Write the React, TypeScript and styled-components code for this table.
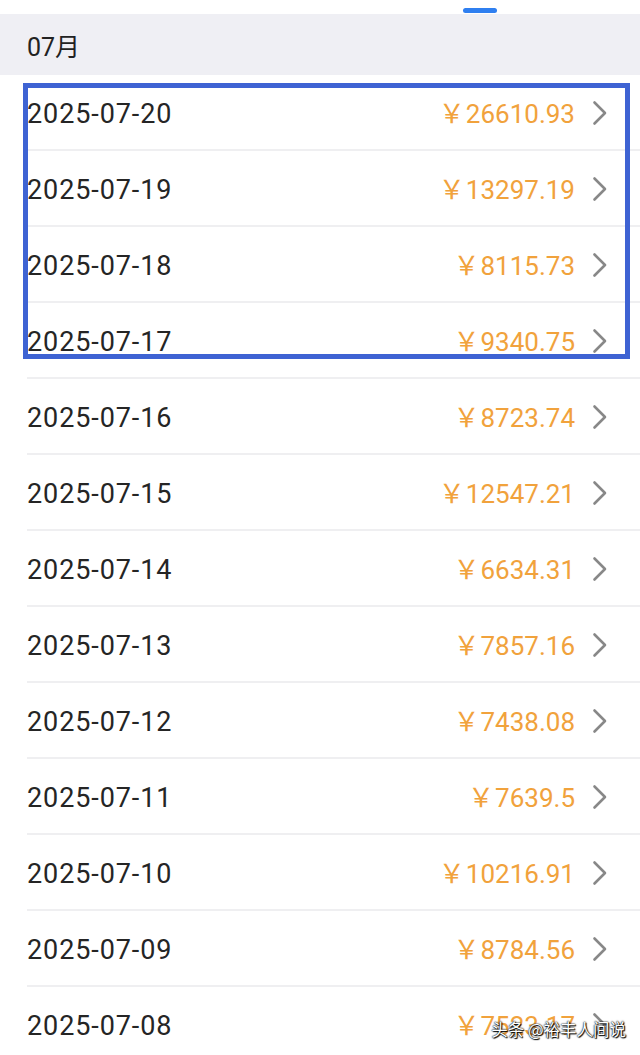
import React from "react";
import styled, { createGlobalStyle } from "styled-components";

const GlobalStyle = createGlobalStyle`
  html, body {
    margin: 0;
    padding: 0;
    background: #ffffff;
  }
  body {
    font-family: Roboto, "Noto Sans CJK SC", sans-serif;
  }
`;

const rows: { date: string; amount: string }[] = [
  { date: "2025-07-20", amount: "26610.93" },
  { date: "2025-07-19", amount: "13297.19" },
  { date: "2025-07-18", amount: "8115.73" },
  { date: "2025-07-17", amount: "9340.75" },
  { date: "2025-07-16", amount: "8723.74" },
  { date: "2025-07-15", amount: "12547.21" },
  { date: "2025-07-14", amount: "6634.31" },
  { date: "2025-07-13", amount: "7857.16" },
  { date: "2025-07-12", amount: "7438.08" },
  { date: "2025-07-11", amount: "7639.5" },
  { date: "2025-07-10", amount: "10216.91" },
  { date: "2025-07-09", amount: "8784.56" },
  { date: "2025-07-08", amount: "7523.17" },
];

const Chevron = () => (
  <svg width="16" height="26" viewBox="0 0 16 26">
    <path
      d="M2.5 2.5 L13 13 L2.5 23.5"
      fill="none"
      stroke="#888888"
      strokeWidth="2.6"
      strokeLinecap="round"
      strokeLinejoin="round"
    />
  </svg>
);

const App = () => {
  return (
    <Page>
      <GlobalStyle />
      <TopBar>
        <Indicator />
      </TopBar>
      <MonthHeader>07月</MonthHeader>
      <List>
        {rows.map((r) => (
          <Row key={r.date}>
            <RowInner>
              <Texts>
                <DateText>{r.date}</DateText>
                <Amount>
                  <Yen>￥</Yen>
                  {r.amount}
                </Amount>
              </Texts>
              <Arrow>
                <Chevron />
              </Arrow>
            </RowInner>
          </Row>
        ))}
        <Highlight />
      </List>
      <Watermark>头条 @裕丰人间说</Watermark>
    </Page>
  );
};

export default App;

const Page = styled.div`
  position: relative;
  width: 640px;
  height: 1055px;
  overflow: hidden;
  background: #ffffff;
`;

const TopBar = styled.div`
  height: 14px;
  display: flex;
  align-items: flex-end;
  padding-left: 463px;
  box-sizing: border-box;
`;

const Indicator = styled.div`
  width: 34px;
  height: 5px;
  border-radius: 3px;
  background: #2f7ff0;
  margin-bottom: 1px;
`;

const MonthHeader = styled.div`
  height: 61px;
  background: #efeff4;
  display: flex;
  align-items: center;
  padding-left: 27px;
  font-size: 25px;
  color: #222222;
`;

const List = styled.div`
  position: relative;
`;

const Row = styled.div`
  height: 76px;
  padding-left: 27px;
  box-sizing: border-box;
`;

const RowInner = styled.div`
  height: 100%;
  display: flex;
  align-items: center;
  border-bottom: 2px solid #efeff1;
  box-sizing: border-box;
  padding-right: 32px;
  padding-top: 2px;
`;

const Texts = styled.div`
  flex: 1;
  display: flex;
  align-items: baseline;
  justify-content: space-between;
`;

const DateText = styled.div`
  font-size: 27px;
  line-height: 32px;
  color: #252525;
  letter-spacing: 0.9px;
`;

const Amount = styled.div`
  font-size: 26px;
  line-height: 32px;
  color: #f1a23c;
`;

const Yen = styled.span`
  font-family: "Noto Sans CJK SC", sans-serif;
  margin-right: 1px;
`;

const Arrow = styled.div`
  display: flex;
  align-items: center;
  margin-left: 17px;
`;

const Highlight = styled.div`
  position: absolute;
  left: 23px;
  top: 8px;
  width: 607px;
  height: 276px;
  border: 5px solid #3e63d3;
  box-sizing: border-box;
  pointer-events: none;
`;

const Watermark = styled.div`
  position: absolute;
  right: 14px;
  bottom: 14px;
  font-size: 16.5px;
  color: #ffffff;
  font-family: "Noto Sans CJK SC", sans-serif;
  text-shadow: 0 0 2px #000, 0 0 1px #000, 1px 1px 1px #000;
`;
